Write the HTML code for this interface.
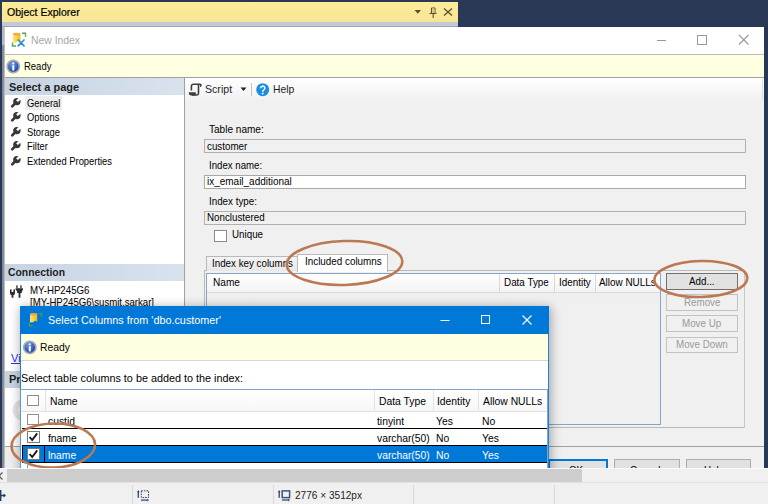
<!DOCTYPE html>
<html><head><meta charset="utf-8"><style>
html,body{margin:0;padding:0}
body{width:768px;height:504px;position:relative;overflow:hidden;background:#293955;font-family:"Liberation Sans",sans-serif}
body>div,body>svg{position:absolute}
.t{white-space:nowrap;transform-origin:0 0}
</style></head><body>
<div style="left:2px;top:2px;width:456px;height:20px;background:linear-gradient(#fdec98,#f7e595);"></div>
<div class="t" style="left:7px;top:6.69px;font-size:11px;line-height:11px;color:#000;transform:scaleX(0.9590);-webkit-text-stroke:0.2px #000">Object Explorer</div>
<div style="left:2px;top:22px;width:456px;height:446px;background:#c3c9d9;"></div>
<svg style="left:410px;top:4px" width="48" height="16"><path d="M4.6 6h6.4l-3.2 3.7z" fill="#5b4f2d"/><path d="M21.5 4v5M25 4v5M21.5 4h3.5M19.5 9.5h7M23.2 9.5v4.5" stroke="#5b4f2d" stroke-width="1.1" fill="none"/><rect x="22" y="4.5" width="2.5" height="4.5" fill="#d9c98a"/><path d="M34 4.5l8 7M42 4.5l-8 7" stroke="#5b4f2d" stroke-width="1.25"/></svg>
<div style="left:4px;top:27px;width:760px;height:441px;background:#fff;"></div>
<div style="left:2px;top:26px;width:456px;height:1px;background:#a0a5b0;"></div>
<div style="left:2px;top:27px;width:2px;height:18px;background:#b3b9ca;"></div>
<div style="left:4px;top:27px;width:1px;height:18px;background:#c6c8ce;"></div>
<div style="left:2px;top:45px;width:1px;height:423px;background:#7d889e;"></div>
<div style="left:3px;top:45px;width:1px;height:423px;background:#8d9097;"></div>
<div style="left:4px;top:45px;width:1px;height:423px;background:#bababa;"></div>
<div class="t" style="left:31px;top:34.69px;font-size:11px;line-height:11px;color:#a6a6a6;transform:scaleX(0.9428);">New Index</div>
<svg style="left:11px;top:32px" width="16" height="15"><path d="M1.5 10.5v3.5h3.5M11 1.3h3.5v3.5" stroke="#58a94a" stroke-width="1.4" fill="none"/><path d="M2 2h7.5v7.5L7.5 8.3 5.5 10.5H2z" fill="url(#cyl)"/><ellipse cx="5.7" cy="2.2" rx="3.7" ry="1.4" fill="#f3a64a"/><path d="M7.2 8l5.8 5.8M13 8l-5.8 5.8" stroke="#2d8fd8" stroke-width="1.7" stroke-linecap="round"/></svg>
<svg style="left:640px;top:27px" width="124" height="27"><path d="M17 13.5h9" stroke="#999" stroke-width="1"/><rect x="57.5" y="8.5" width="9" height="9" fill="none" stroke="#999"/><path d="M99 8l9.5 9.5M108.5 8L99 17.5" stroke="#999" stroke-width="1.1"/></svg>
<div style="left:5px;top:54px;width:759px;height:1px;background:#bdbdbd;"></div>
<div style="left:5px;top:55px;width:759px;height:22px;background:#ffffe1;"></div>
<div style="left:5px;top:77px;width:759px;height:1px;background:#a0a0a0;"></div>
<div class="t" style="left:24px;top:60.89px;font-size:11px;line-height:11px;color:#000;transform:scaleX(0.8617);">Ready</div>
<svg style="left:6px;top:59px" width="16" height="16"><defs><radialGradient id="ig" cx="0.4" cy="0.3" r="0.7"><stop offset="0" stop-color="#6d9be8"/><stop offset="1" stop-color="#1b3c9e"/></radialGradient></defs><circle cx="7.3" cy="7.5" r="6.1" fill="url(#ig)" stroke="#a3aaba" stroke-width="1.7"/><circle cx="7.3" cy="4.4" r="1.1" fill="#fff"/><rect x="6.3" y="6.3" width="2" height="5.2" fill="#fff"/></svg>
<div style="left:5px;top:78px;width:179px;height:390px;background:#fff;"></div>
<div style="left:184px;top:78px;width:1px;height:390px;background:#a0a0a0;"></div>
<div style="left:5px;top:78px;width:179px;height:17px;background:linear-gradient(to right,#c6d3e1,#d8e3ee);"></div>
<div class="t" style="left:9px;top:81.69px;font-size:11px;line-height:11px;font-weight:bold;color:#1e1e1e;transform:scaleX(0.9955);">Select a page</div>
<div style="left:25px;top:96px;width:37px;height:14px;background:#ededed;"></div>
<div class="t" style="left:27px;top:97.69px;font-size:11px;line-height:11px;color:#000;transform:scaleX(0.8530);">General</div>
<svg style="left:10px;top:96.5px" width="13" height="13"><circle cx="6.9" cy="4.6" r="3.7" fill="#383838"/><path d="M6.9 4.4L12.5 -1.2" stroke="#fff" stroke-width="2.4"/><path d="M6.2 5.3L2.2 9.4" stroke="#383838" stroke-width="2.7" stroke-linecap="round"/></svg>
<div class="t" style="left:27px;top:112.29px;font-size:11px;line-height:11px;color:#000;transform:scaleX(0.8530);">Options</div>
<svg style="left:10px;top:111.1px" width="13" height="13"><circle cx="6.9" cy="4.6" r="3.7" fill="#383838"/><path d="M6.9 4.4L12.5 -1.2" stroke="#fff" stroke-width="2.4"/><path d="M6.2 5.3L2.2 9.4" stroke="#383838" stroke-width="2.7" stroke-linecap="round"/></svg>
<div class="t" style="left:27px;top:127.09px;font-size:11px;line-height:11px;color:#000;transform:scaleX(0.8530);">Storage</div>
<svg style="left:10px;top:125.9px" width="13" height="13"><circle cx="6.9" cy="4.6" r="3.7" fill="#383838"/><path d="M6.9 4.4L12.5 -1.2" stroke="#fff" stroke-width="2.4"/><path d="M6.2 5.3L2.2 9.4" stroke="#383838" stroke-width="2.7" stroke-linecap="round"/></svg>
<div class="t" style="left:27px;top:141.29px;font-size:11px;line-height:11px;color:#000;transform:scaleX(0.8530);">Filter</div>
<svg style="left:10px;top:140.1px" width="13" height="13"><circle cx="6.9" cy="4.6" r="3.7" fill="#383838"/><path d="M6.9 4.4L12.5 -1.2" stroke="#fff" stroke-width="2.4"/><path d="M6.2 5.3L2.2 9.4" stroke="#383838" stroke-width="2.7" stroke-linecap="round"/></svg>
<div class="t" style="left:27px;top:156.09px;font-size:11px;line-height:11px;color:#000;transform:scaleX(0.8530);">Extended Properties</div>
<svg style="left:10px;top:154.9px" width="13" height="13"><circle cx="6.9" cy="4.6" r="3.7" fill="#383838"/><path d="M6.9 4.4L12.5 -1.2" stroke="#fff" stroke-width="2.4"/><path d="M6.2 5.3L2.2 9.4" stroke="#383838" stroke-width="2.7" stroke-linecap="round"/></svg>
<div style="left:5px;top:264px;width:179px;height:17px;background:linear-gradient(to right,#c6d3e1,#d8e3ee);"></div>
<div class="t" style="left:8px;top:266.69px;font-size:11px;line-height:11px;font-weight:bold;color:#1e1e1e;transform:scaleX(0.9422);">Connection</div>
<div class="t" style="left:30px;top:284.79px;font-size:11px;line-height:11px;color:#000;transform:scaleX(0.8820);">MY-HP245G6</div>
<div class="t" style="left:30px;top:296.69px;font-size:11px;line-height:11px;color:#000;transform:scaleX(0.8731);">[MY-HP245G6\susmit.sarkar]</div>
<svg style="left:5px;top:280px" width="24" height="20"><path d="M5 9.5h1.6v2.6h1.8V9.5H10v3.4a2.4 2.4 0 0 1-1.6 2.3V17.8H6.6V15.2A2.4 2.4 0 0 1 5 12.9z" fill="#2c2c2c"/><rect x="11.3" y="5.3" width="1.3" height="2.8" fill="#2c2c2c"/><rect x="15.3" y="5.3" width="1.3" height="2.8" fill="#2c2c2c"/><path d="M10.6 8.3h7.4v1.6l-1.1 1.1V13h-1.5v4.8h-1.8V13h-1.5v-2L10.6 9.9z" fill="#2c2c2c"/></svg>
<div class="t" style="left:11px;top:352.69px;font-size:11px;line-height:11px;color:#3030e0;text-decoration:underline">View connection properties</div>
<div style="left:5px;top:371px;width:179px;height:17px;background:linear-gradient(to right,#c6d3e1,#d8e3ee);"></div>
<div class="t" style="left:9px;top:373.69px;font-size:11px;line-height:11px;font-weight:bold;color:#1e1e1e;">Progress</div>
<svg style="left:10px;top:398px" width="24" height="24"><circle cx="13" cy="12" r="10.5" fill="#e4e4e4"/><circle cx="13" cy="12" r="5" fill="#f4f4f4"/></svg>
<div style="left:5px;top:447px;width:179px;height:21px;background:#ededed;"></div>
<div style="left:185px;top:78px;width:579px;height:390px;background:#f0f0f0;"></div>
<div style="left:185px;top:78px;width:579px;height:24px;background:linear-gradient(#ffffff,#f0f0f0)"></div>
<svg style="left:185px;top:80px" width="20" height="18"><path d="M6.4 10.5V6.2a2 2 0 0 1 2-2H15a1 1 0 0 1 0 2" stroke="#3c3c3c" stroke-width="1.6" fill="none"/><path d="M13.5 5V13.2a1.8 1.8 0 0 1-1.8 1.8H7" stroke="#3c3c3c" stroke-width="1.6" fill="none"/><path d="M3.8 12.2H10.8V14.2a1.6 1.6 0 0 1-1.6 1.4H6.2a2.4 2.4 0 0 1-2.4-2.4z" fill="#3c3c3c"/></svg>
<div class="t" style="left:204.8px;top:83.69px;font-size:11px;line-height:11px;color:#1e1e1e;transform:scaleX(0.9638);">Script</div>
<svg style="left:240px;top:87px" width="7" height="5"><path d="M0.5 0.5h6l-3 3.5z" fill="#222"/></svg>
<div style="left:251px;top:83px;width:1px;height:13px;background:#c4c4c4;"></div>
<div style="left:762px;top:79px;width:1px;height:20px;background:#dcdcdc;"></div>
<svg style="left:256px;top:82.5px" width="14" height="14"><circle cx="6.7" cy="6.7" r="6.5" fill="#1a8fe0"/><path d="M4.6 5.3a2.1 2.1 0 1 1 3 1.8c-.7.4-.9.8-.9 1.6" stroke="#fff" stroke-width="1.5" fill="none"/><circle cx="6.7" cy="10.5" r="0.95" fill="#fff"/></svg>
<div class="t" style="left:272.7px;top:83.99px;font-size:11px;line-height:11px;color:#1e1e1e;transform:scaleX(0.9415);">Help</div>
<div class="t" style="left:208.9px;top:123.99px;font-size:11px;line-height:11px;color:#000;transform:scaleX(0.9128);">Table name:</div>
<div style="left:204px;top:139px;width:542px;height:14px;background:#f0f0f0;box-sizing:border-box;border:1px solid #b0b0b0"></div>
<div class="t" style="left:206.7px;top:140.79px;font-size:11px;line-height:11px;color:#000;transform:scaleX(0.8900);">customer</div>
<div class="t" style="left:208.75px;top:159.89px;font-size:11px;line-height:11px;color:#000;transform:scaleX(0.8771);">Index name:</div>
<div style="left:204px;top:175px;width:542px;height:14px;background:#fff;box-sizing:border-box;border:1px solid #a8a8a8"></div>
<div class="t" style="left:206.7px;top:175.89px;font-size:11px;line-height:11px;color:#000;transform:scaleX(0.9064);">ix_email_additional</div>
<div class="t" style="left:208.75px;top:195.69px;font-size:11px;line-height:11px;color:#000;transform:scaleX(0.8900);">Index type:</div>
<div style="left:204px;top:211px;width:542px;height:14px;background:#f0f0f0;box-sizing:border-box;border:1px solid #b0b0b0"></div>
<div class="t" style="left:207px;top:211.94px;font-size:11px;line-height:11px;color:#000;transform:scaleX(0.8887);">Nonclustered</div>
<div style="left:214px;top:230px;width:13px;height:12px;background:#fff;box-sizing:border-box;border:1px solid #8a8a8a"></div>
<div class="t" style="left:231.7px;top:229.29px;font-size:11px;line-height:11px;color:#000;transform:scaleX(0.8900);">Unique</div>
<div style="left:204px;top:270px;width:541px;height:158px;background:#f0f0f0;box-sizing:border-box;border:1px solid #b9b9b9"></div>
<div style="left:206px;top:256px;width:92px;height:15px;background:linear-gradient(#f4f4f4,#e8e8e8);box-sizing:border-box;border:1px solid #b9b9b9;border-bottom:none"></div>
<div class="t" style="left:211.9px;top:257.79px;font-size:11px;line-height:11px;color:#000;transform:scaleX(0.8891);">Index key columns</div>
<div style="left:297px;top:254px;width:91px;height:18px;background:#fff;box-sizing:border-box;border:1px solid #b9b9b9;border-bottom:none"></div>
<div class="t" style="left:304.5px;top:256.19px;font-size:11px;line-height:11px;color:#000;transform:scaleX(0.8960);">Included columns</div>
<div style="left:206px;top:273px;width:455px;height:152px;background:linear-gradient(#e9e9e9,#f0f0f0 18%);box-sizing:border-box;border:1px solid #88a5c4"></div>
<div style="left:207px;top:274px;width:453px;height:18px;background:linear-gradient(#ffffff,#f3f3f3);border-bottom:1px solid #dadada"></div>
<div style="left:498.5px;top:274px;width:1px;height:18px;background:#d8d8d8;"></div>
<div style="left:553.5px;top:274px;width:1px;height:18px;background:#d8d8d8;"></div>
<div style="left:594.5px;top:274px;width:1px;height:18px;background:#d8d8d8;"></div>
<div class="t" style="left:212.5px;top:276.57px;font-size:11.5px;line-height:11.5px;color:#000;transform:scaleX(0.8800);">Name</div>
<div class="t" style="left:503.9px;top:276.57px;font-size:11.5px;line-height:11.5px;color:#000;transform:scaleX(0.8581);">Data Type</div>
<div class="t" style="left:558.5px;top:276.57px;font-size:11.5px;line-height:11.5px;color:#000;transform:scaleX(0.8577);">Identity</div>
<div class="t" style="left:599.3px;top:276.57px;font-size:11.5px;line-height:11.5px;color:#000;transform:scaleX(0.8613);">Allow NULLs</div>
<div style="left:661px;top:270px;width:84px;height:158px;background:transparent;box-sizing:border-box;border-right:1px solid #c8c8c8"></div>
<div style="left:666px;top:273px;width:72px;height:17px;background:#e1e1e1;box-sizing:border-box;border:1px solid #707070"></div>
<div class="t" style="left:689.2px;top:276.19px;font-size:11px;line-height:11px;color:#000;transform:scaleX(0.8900);">Add...</div>
<div style="left:666px;top:294px;width:72px;height:17px;background:#f0f0f0;box-sizing:border-box;border:1px solid #c2c2c2"></div>
<div class="t" style="left:683.8px;top:297.09px;font-size:11px;line-height:11px;color:#999;transform:scaleX(0.8900);">Remove</div>
<div style="left:666px;top:315px;width:72px;height:17px;background:#f0f0f0;box-sizing:border-box;border:1px solid #c2c2c2"></div>
<div class="t" style="left:682.4px;top:318.09px;font-size:11px;line-height:11px;color:#999;transform:scaleX(0.8900);">Move Up</div>
<div style="left:666px;top:337px;width:72px;height:16px;background:#f0f0f0;box-sizing:border-box;border:1px solid #c2c2c2"></div>
<div class="t" style="left:676.2px;top:339.09px;font-size:11px;line-height:11px;color:#999;transform:scaleX(0.8900);">Move Down</div>
<div style="left:5px;top:446px;width:759px;height:1px;background:#a0a0a0;"></div>
<div style="left:548px;top:459px;width:60px;height:20px;background:#e1e1e1;box-sizing:border-box;border:2px solid #0078d7"></div>
<div style="left:613.5px;top:459px;width:66px;height:20px;background:#e1e1e1;box-sizing:border-box;border:1px solid #adadad"></div>
<div style="left:685.5px;top:459px;width:65px;height:20px;background:#e1e1e1;box-sizing:border-box;border:1px solid #adadad"></div>
<div class="t" style="left:569px;top:464.89px;font-size:11px;line-height:11px;color:#000;transform:scaleX(0.8900);">OK</div>
<div class="t" style="left:630.4px;top:464.89px;font-size:11px;line-height:11px;color:#000;transform:scaleX(0.8900);">Cancel</div>
<div class="t" style="left:704px;top:464.89px;font-size:11px;line-height:11px;color:#000;transform:scaleX(0.8900);">Help</div>
<div style="left:20px;top:306px;width:529px;height:170px;box-shadow:1px 2px 10px 1px rgba(0,0,0,0.32)"></div>
<div style="left:20px;top:306px;width:529px;height:162px;background:#fff;box-sizing:border-box;border:1px solid #1883d7;border-bottom:none"></div>
<div style="left:20px;top:306px;width:529px;height:28px;background:#0078d7;"></div>
<div class="t" style="left:47.8px;top:315.19px;font-size:11px;line-height:11px;color:#fff;transform:scaleX(0.9830);">Select Columns from &#x27;dbo.customer&#x27;</div>
<svg style="left:28px;top:312px" width="15" height="15"><defs><linearGradient id="cyl" x1="0" x2="1"><stop offset="0" stop-color="#ffe680"/><stop offset="1" stop-color="#f2c000"/></linearGradient></defs><path d="M1.2 10.5v3.3h3.3M10.5 1.6h3v3.3" stroke="#4f9f3f" stroke-width="1.3" fill="none"/><path d="M2 2.2h7.2v7.5L7 8.5 5.3 10.2H2z" fill="url(#cyl)"/><ellipse cx="5.6" cy="2.4" rx="3.6" ry="1.3" fill="#f3a64a"/></svg>
<svg style="left:420px;top:306px" width="128" height="28"><path d="M20.5 14.5h9" stroke="#fff" stroke-width="1"/><rect x="61.5" y="9.5" width="8" height="8" fill="none" stroke="#fff"/><path d="M102.5 9.5l9 9M111.5 9.5l-9 9" stroke="#fff" stroke-width="1.1"/></svg>
<div style="left:21px;top:334px;width:527px;height:27px;background:#ffffe1;"></div>
<div style="left:21px;top:360px;width:527px;height:1px;background:#d6d6d6;"></div>
<svg style="left:22px;top:340px" width="16" height="16"><circle cx="7.8" cy="7.4" r="6.1" fill="url(#ig)" stroke="#a3aaba" stroke-width="1.7"/><circle cx="7.8" cy="4.3" r="1.1" fill="#fff"/><rect x="6.8" y="6.2" width="2" height="5.2" fill="#fff"/></svg>
<div class="t" style="left:40.2px;top:342.09px;font-size:11px;line-height:11px;color:#000;transform:scaleX(0.9400);">Ready</div>
<div class="t" style="left:21.4px;top:373.29px;font-size:11px;line-height:11px;color:#000;transform:scaleX(0.9838);">Select table columns to be added to the index:</div>
<div style="left:21px;top:389px;width:527px;height:79px;background:#fff;box-sizing:border-box;border-top:1px solid #82a4c8;border-right:1px solid #82a4c8"></div>
<div style="left:20px;top:389px;width:1px;height:79px;background:#5b9bd5;"></div>
<div style="left:21px;top:390px;width:526px;height:21px;background:linear-gradient(#ffffff,#f7f7f7);border-bottom:1px solid #e0e0e0"></div>
<div style="left:44.5px;top:390px;width:1px;height:21px;background:#e3e3e3;"></div>
<div style="left:374px;top:390px;width:1px;height:21px;background:#e3e3e3;"></div>
<div style="left:432.5px;top:390px;width:1px;height:21px;background:#e3e3e3;"></div>
<div style="left:478px;top:390px;width:1px;height:21px;background:#e3e3e3;"></div>
<div style="left:27px;top:395px;width:12px;height:11px;background:#fff;box-sizing:border-box;border:1px solid #8e8e8e"></div>
<div class="t" style="left:50px;top:395.69px;font-size:11px;line-height:11px;color:#000;transform:scaleX(0.9400);">Name</div>
<div class="t" style="left:379.1px;top:395.69px;font-size:11px;line-height:11px;color:#000;transform:scaleX(0.9400);">Data Type</div>
<div class="t" style="left:437.4px;top:395.69px;font-size:11px;line-height:11px;color:#000;transform:scaleX(0.9400);">Identity</div>
<div class="t" style="left:482.5px;top:395.69px;font-size:11px;line-height:11px;color:#000;transform:scaleX(0.9418);">Allow NULLs</div>
<div style="left:27px;top:414px;width:12px;height:11px;background:#fff;box-sizing:border-box;border:1px solid #8e8e8e"></div>
<div class="t" style="left:48.3px;top:415.69px;font-size:11px;line-height:11px;color:#000;transform:scaleX(0.9400);">custid</div>
<div class="t" style="left:377px;top:415.69px;font-size:11px;line-height:11px;color:#000;transform:scaleX(0.9400);">tinyint</div>
<div class="t" style="left:436px;top:415.69px;font-size:11px;line-height:11px;color:#000;transform:scaleX(0.9400);">Yes</div>
<div class="t" style="left:481.7px;top:415.69px;font-size:11px;line-height:11px;color:#000;transform:scaleX(0.9400);">No</div>
<div style="left:22px;top:428px;width:525px;height:1px;background:#000;"></div>
<div style="left:27px;top:431px;width:13px;height:12px;background:#fff;box-sizing:border-box;border:1px solid #7a7a7a"></div>
<svg style="left:27px;top:431px" width="13" height="12"><path d="M2.6 6l2.6 3 5-6.6" stroke="#1a1a1a" stroke-width="1.9" fill="none"/></svg>
<div class="t" style="left:48.3px;top:432.99px;font-size:11px;line-height:11px;color:#000;transform:scaleX(0.9400);">fname</div>
<div class="t" style="left:377px;top:432.99px;font-size:11px;line-height:11px;color:#000;transform:scaleX(0.9370);">varchar(50)</div>
<div class="t" style="left:436px;top:432.99px;font-size:11px;line-height:11px;color:#000;transform:scaleX(0.9400);">No</div>
<div class="t" style="left:481.7px;top:432.99px;font-size:11px;line-height:11px;color:#000;transform:scaleX(0.9400);">Yes</div>
<div style="left:22px;top:445px;width:525px;height:1px;background:#000;"></div>
<div style="left:22px;top:446px;width:525px;height:16px;background:#0078d7;"></div>
<div style="left:22px;top:462px;width:525px;height:1px;background:#000;"></div>
<div style="left:22px;top:445px;width:23px;height:18px;background:transparent;box-sizing:border-box;border:1px solid #000"></div>
<div style="left:27px;top:448px;width:13px;height:12px;background:#fff;box-sizing:border-box;border:1px solid #7a7a7a"></div>
<svg style="left:27px;top:448px" width="13" height="12"><path d="M2.6 6l2.6 3 5-6.6" stroke="#1a1a1a" stroke-width="1.9" fill="none"/></svg>
<div class="t" style="left:48.3px;top:449.99px;font-size:11px;line-height:11px;color:#fff;transform:scaleX(0.9400);">lname</div>
<div class="t" style="left:377px;top:449.99px;font-size:11px;line-height:11px;color:#fff;transform:scaleX(0.9370);">varchar(50)</div>
<div class="t" style="left:436px;top:449.99px;font-size:11px;line-height:11px;color:#fff;transform:scaleX(0.9400);">No</div>
<div class="t" style="left:481.7px;top:449.99px;font-size:11px;line-height:11px;color:#fff;transform:scaleX(0.9400);">Yes</div>
<div style="left:27px;top:465px;width:1px;height:3px;background:#8e8e8e;"></div>
<svg style="left:0;top:0" width="768" height="504"><g fill="none" stroke="#bc7852" stroke-width="2.6"><ellipse cx="344.5" cy="263" rx="57.8" ry="22" transform="rotate(-1.8 344.5 263)"/><ellipse cx="700.8" cy="279" rx="46.5" ry="18" transform="rotate(-1.2 700.8 279)"/><ellipse cx="53.3" cy="445.5" rx="41.8" ry="22" transform="rotate(-1.5 53.3 445.5)"/></g></svg>
<div style="left:0px;top:468px;width:768px;height:15px;background:#f0f0f0;"></div>
<div style="left:0px;top:468px;width:768px;height:1px;background:#fafafa;"></div>
<div style="left:7px;top:469px;width:575px;height:13px;background:#cdcdcd;"></div>
<div style="left:0px;top:482px;width:768px;height:1px;background:#e2e2e2;"></div>
<div style="left:0px;top:483px;width:768px;height:21px;background:#f0f0f0;"></div>
<div style="left:132px;top:485px;width:1px;height:19px;background:#d9d9d9;"></div>
<div style="left:273px;top:485px;width:1px;height:19px;background:#d9d9d9;"></div>
<div style="left:413px;top:485px;width:1px;height:19px;background:#d9d9d9;"></div>
<div style="left:554px;top:485px;width:1px;height:19px;background:#d9d9d9;"></div>
<div class="t" style="left:295.2px;top:490.39px;font-size:11px;line-height:11px;color:#1e1e1e;transform:scaleX(0.9166);">2776 × 3512px</div>
<svg style="left:0;top:470px" width="8" height="12"><path d="M2.5 2.5l-3.5 3.5 3.5 3.5" stroke="#606060" stroke-width="1.3" fill="none"/></svg>
<svg style="left:0;top:489px" width="8" height="13"><path d="M0.6 1v11M0 6.5h4.5" stroke="#1f3a5a" stroke-width="1.6" fill="none"/><path d="M3.5 4.5l2.5 2-2.5 2z" fill="#1f3a5a"/></svg>
<svg style="left:137px;top:489px" width="13" height="14"><path d="M1.3 2.5v6.3" stroke="#2a4466" stroke-width="1.3"/><path d="M0 3.3l1.3-2.2 1.3 2.2z" fill="#2a4466"/><rect x="4.3" y="1.8" width="7.2" height="6.7" fill="none" stroke="#2a4466" stroke-width="1" stroke-dasharray="1.6 1"/><path d="M4 11.1h6.3" stroke="#2a4466" stroke-width="1.2"/><path d="M10.2 9.7l1.8 1.4-1.8 1.4z" fill="#2a4466"/></svg>
<svg style="left:278px;top:489px" width="13" height="14"><path d="M1.2 2.5v6.3" stroke="#2a4466" stroke-width="1.3"/><path d="M-0.1 3.3l1.3-2.2 1.3 2.2z" fill="#2a4466"/><rect x="4.2" y="1.9" width="7.4" height="6.7" fill="#eaf2fa" stroke="#3c5678" stroke-width="1.5"/><path d="M4 11h6.3" stroke="#2a4466" stroke-width="1.2"/><path d="M10.2 9.6l1.8 1.4-1.8 1.4z" fill="#2a4466"/></svg>
</body></html>
